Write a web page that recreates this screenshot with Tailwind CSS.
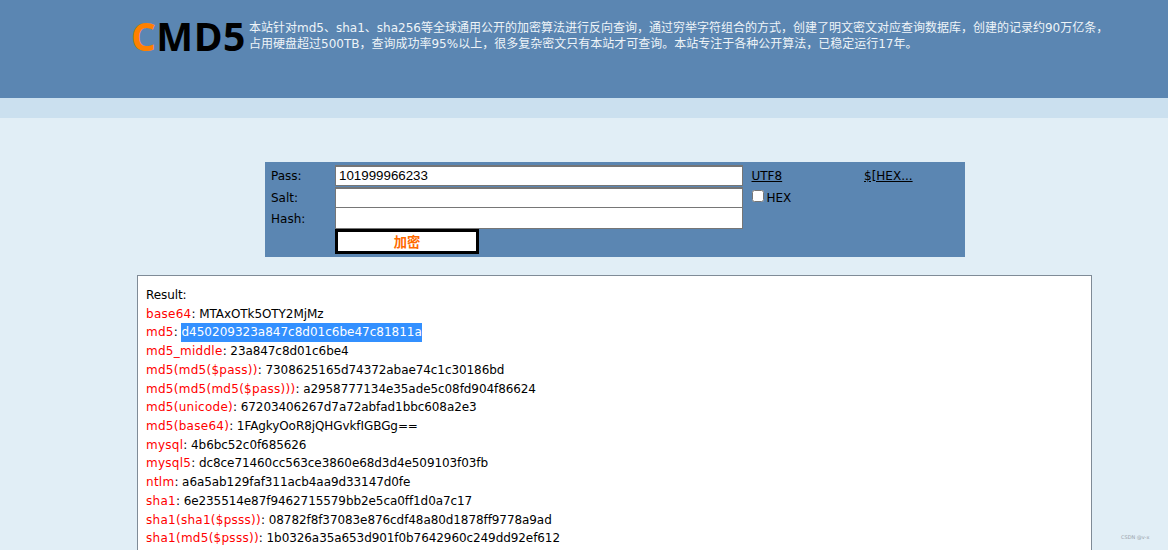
<!doctype html>
<html lang="zh-CN">
<head>
    <meta charset="UTF-8">
    <title>CMD5</title>
    <script src="https://cdn.jsdelivr.net/npm/@tailwindcss/browser@4"></script>
</head>
<body class="relative h-[550px] overflow-hidden bg-[#e1eef6] text-[12px] text-black font-['DejaVu_Sans','Noto_Sans_CJK_SC',sans-serif]">
<header class="h-[98px] bg-[#5b86b2] pl-[131px] pt-[14px] flex items-start">
    <div class="w-[118px] text-[39px] leading-[44px] font-bold tracking-[0.5px] font-['Open_Sans',sans-serif]"><span class="text-[#ff8000]">C</span>MD5</div>
    <p class="w-[860px] pt-[6px] text-[12px] leading-[16px] text-[#eef4f8]">本站针对md5、sha1、sha256等全球通用公开的加密算法进行反向查询，通过穷举字符组合的方式，创建了明文密文对应查询数据库，创建的记录约90万亿条，占用硬盘超过500TB，查询成功率95%以上，很多复杂密文只有本站才可查询。本站专注于各种公开算法，已稳定运行17年。</p>
</header>
<div class="h-[20px] bg-[#cbe0ef]"></div>

<form class="mt-[44px] ml-[265px] w-[700px] h-[95px] bg-[#5b86b2] pl-[6px] pt-[3px] grid grid-cols-[64px_408px_121px_1fr] grid-rows-[22px_21px_21px_25px] gap-y-0 leading-[21px]">
    <label class="self-center">Pass:</label>
    <input type="text" value="101999966233" class="h-[21px] bg-white border border-[#767676] border-t-2 px-[3px] pb-[2px] text-[13.33px] font-['Liberation_Sans',sans-serif]">
    <a href="#" class="ml-[8.5px] self-center underline">UTF8</a>
    <a href="#" class="self-center underline">$[HEX...</a>

    <label class="self-center pt-[2px]">Salt:</label>
    <input type="text" class="h-[21px] bg-white border border-[#767676] border-t-2">
    <label class="ml-[8.5px] pt-[1px] col-span-2 flex items-center gap-[3px]"><input type="checkbox" class="w-[12px] h-[12px] mb-[4px] appearance-auto">HEX</label>

    <label class="self-center pt-[2px]">Hash:</label>
    <input type="text" class="h-[21px] bg-white border border-[#767676] border-t-0">
    <div class="col-span-2"></div>

    <div></div>
    <button type="button" class="w-[144px] h-[25px] bg-white border-[3px] border-black pt-[2px] text-[13.33px] text-[#ff6a00] font-bold leading-[18px]">加密</button>
</form>

<section class="mt-[18px] ml-[137px] w-[955px] h-[275px] overflow-hidden bg-white border border-b-0 border-[#7f8b97] pl-[8px] pt-[10px] leading-[18.72px] tracking-[-0.08px]">
    <p>Result:</p>
    <p><span class="text-[#ff0000] tracking-[0.27px]">base64</span>: MTAxOTk5OTY2MjMz</p>
    <p><span class="text-[#ff0000] tracking-[0.27px]">md5</span>: <span class="inline-block bg-[#3390ff] text-white tracking-normal">d450209323a847c8d01c6be47c81811a</span></p>
    <p><span class="text-[#ff0000] tracking-[0.27px]">md5_middle</span>: 23a847c8d01c6be4</p>
    <p><span class="text-[#ff0000] tracking-[0.27px]">md5(md5($pass))</span>: 7308625165d74372abae74c1c30186bd</p>
    <p><span class="text-[#ff0000] tracking-[0.27px]">md5(md5(md5($pass)))</span>: a2958777134e35ade5c08fd904f86624</p>
    <p><span class="text-[#ff0000] tracking-[0.27px]">md5(unicode)</span>: 67203406267d7a72abfad1bbc608a2e3</p>
    <p><span class="text-[#ff0000] tracking-[0.27px]">md5(base64)</span>: 1FAgkyOoR8jQHGvkfIGBGg==</p>
    <p><span class="text-[#ff0000] tracking-[0.27px]">mysql</span>: 4b6bc52c0f685626</p>
    <p><span class="text-[#ff0000] tracking-[0.27px]">mysql5</span>: dc8ce71460cc563ce3860e68d3d4e509103f03fb</p>
    <p><span class="text-[#ff0000] tracking-[0.27px]">ntlm</span>: a6a5ab129faf311acb4aa9d33147d0fe</p>
    <p><span class="text-[#ff0000] tracking-[0.27px]">sha1</span>: 6e235514e87f9462715579bb2e5ca0ff1d0a7c17</p>
    <p><span class="text-[#ff0000] tracking-[0.27px]">sha1(sha1($psss))</span>: 08782f8f37083e876cdf48a80d1878ff9778a9ad</p>
    <p><span class="text-[#ff0000] tracking-[0.27px]">sha1(md5($psss))</span>: 1b0326a35a653d901f0b7642960c249dd92ef612</p>
</section>

<span class="absolute left-[1121px] top-[534px] text-[5px] leading-[6px] text-[#9aa3aa]">CSDN @v-x</span>
</body>
</html>
